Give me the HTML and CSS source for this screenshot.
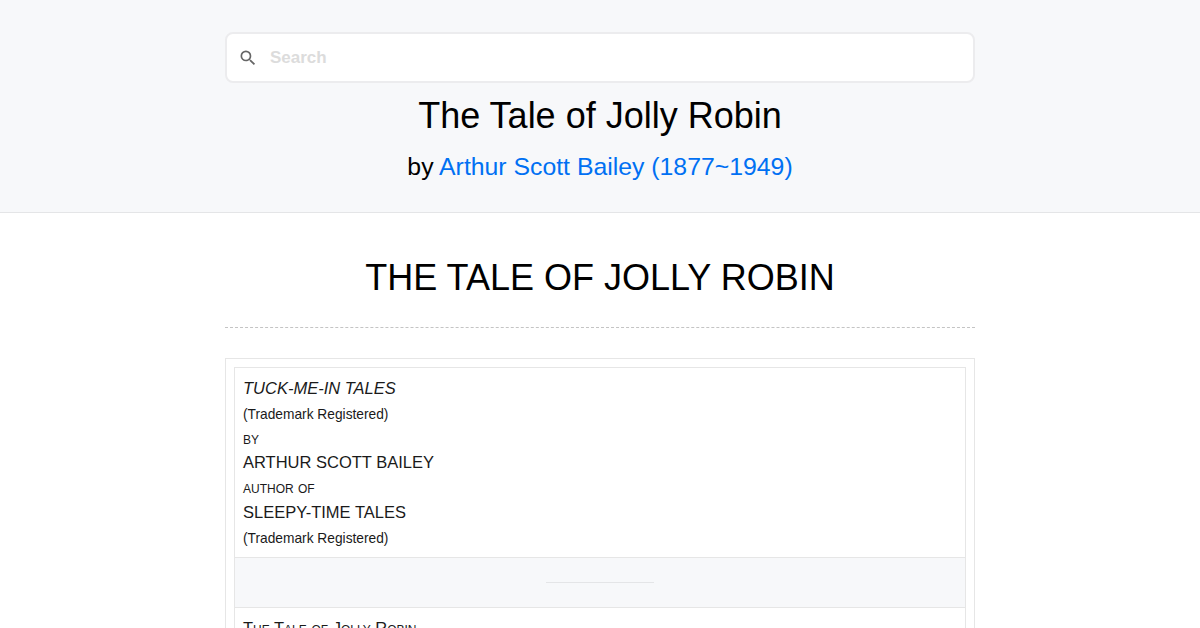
FILE: index.html
```html
<!DOCTYPE html>
<html lang="en">
<head>
  <meta charset="UTF-8">
  <meta name="viewport" content="width=device-width, initial-scale=1.0">
  <title>The Tale of Jolly Robin</title>
  <link rel="stylesheet" href="styles.css">
</head>
<body>
  <header class="top">
    <div class="wrap">
      <div class="search">
        <svg class="search-icon" width="24" height="24" viewBox="0 0 24 24" aria-hidden="true">
          <path d="M15.5 14h-.79l-.28-.27A6.47 6.47 0 0 0 16 9.5 6.5 6.5 0 1 0 9.5 16c1.61 0 3.09-.59 4.23-1.57l.27.28v.79l5 4.99L20.49 19l-4.99-5zm-6 0C7.01 14 5 11.99 5 9.5S7.01 5 9.5 5 14 7.01 14 9.5 11.99 14 9.5 14z"/>
        </svg>
        <input class="search-input" type="text" placeholder="Search">
      </div>
      <div class="book-title">The Tale of Jolly Robin</div>
      <div class="book-author">by <a href="#author">Arthur Scott Bailey (1877~1949)</a></div>
    </div>
  </header>

  <main class="wrap content">
    <h1>THE TALE OF JOLLY ROBIN</h1>
    <hr class="rule">
    <div class="table-box">
      <table>
        <tr>
          <td>
            <p><i>TUCK-ME-IN TALES</i></p>
            <p><span class="small">(Trademark Registered)</span></p>
            <p><span class="tiny">BY</span></p>
            <p>ARTHUR SCOTT BAILEY</p>
            <p><span class="tiny">AUTHOR OF</span></p>
            <p>SLEEPY-TIME TALES</p>
            <p><span class="small">(Trademark Registered)</span></p>
          </td>
        </tr>
        <tr>
          <td class="cell-grey"><hr class="short-rule"></td>
        </tr>
        <tr>
          <td><p class="caps">The Tale of Jolly Robin</p></td>
        </tr>
      </table>
    </div>
  </main>
</body>
</html>
```

FILE: styles.css
```css
html, body { height: 628px; overflow: hidden; }
body { margin: 0; font-family: "Liberation Sans", Arial, sans-serif; color: #000; background: #fff; }
a { color: #0070f3; text-decoration: none; }
.wrap { width: 750px; margin: 0 auto; }
.top { background: #f7f8fa; border-bottom: 1px solid #e4e5e7; padding: 32px 0 29px; }
.search { display: flex; align-items: center; height: 51px; box-sizing: border-box; background: #fff; border: 2px solid #ececee; border-radius: 8px; padding: 0 11px; }
.search-icon { width: 20px; height: 20px; fill: #666; flex: none; }
.search-input { flex: 1; margin-left: 12px; padding: 0; border: none; outline: none; background: none; font: bold 17px "Liberation Sans", Arial, sans-serif; }
.search-input::placeholder { color: #dcdcdc; opacity: 1; }
.book-title { margin-top: 10px; font-size: 36px; line-height: 45px; text-align: center; }
.book-author { margin-top: 13px; font-size: 24.8px; line-height: 32px; text-align: center; }
.content { padding-top: 40px; }
h1 { margin: 0; font-size: 36px; font-weight: normal; line-height: 50px; text-align: center; }
.rule { margin: 24px 0 30px; border: none; border-top: 1px dashed #c4c4c4; }
.table-box { border: 1px solid #e6e6e6; padding: 8px; }
table { width: 100%; border-collapse: collapse; }
td { border: 1px solid #e6e6e6; padding: 8px; color: #1a1a1a; }
p { margin: 0; font-size: 16.5px; line-height: 24.75px; }
.small { font-size: 13.75px; line-height: 1; }
.tiny { font-size: 12px; line-height: 1; word-spacing: 1px; }
.caps { font-variant: small-caps; }
.cell-grey { background: #f7f8fa; height: 33px; padding: 8px; }
.short-rule { width: 108px; margin: 0 auto; border: none; border-top: 1px solid #e4e5e7; }
```
